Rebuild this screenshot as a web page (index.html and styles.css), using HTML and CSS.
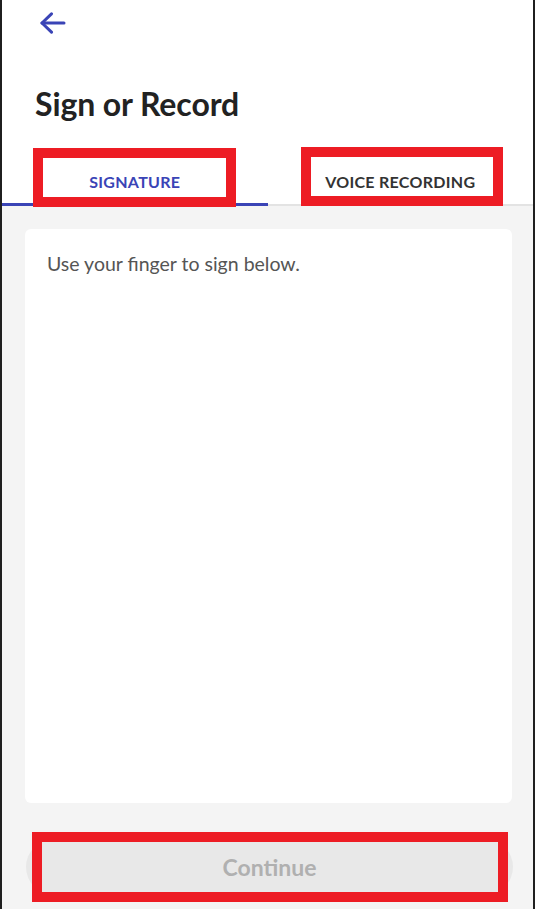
FILE: index.html
```html
<!DOCTYPE html>
<html>
<head>
<meta charset="utf-8">
<link rel="stylesheet" href="styles.css">
</head>
<body>
<div class="screen">
  <header class="header">
    <button class="back" aria-label="Back">
      <svg width="26" height="22" viewBox="0 0 26 22" fill="none" stroke="#3a44b6" stroke-width="3" stroke-linecap="round" stroke-linejoin="round">
        <path d="M2 11H24"/>
        <path d="M11.5 1.8L2 11L11.5 20.2"/>
      </svg>
    </button>
    <h1 class="title">Sign or Record</h1>
  </header>
  <nav class="tabs">
    <div class="tab active">SIGNATURE</div>
    <div class="tab">VOICE RECORDING</div>
  </nav>
  <main class="content">
    <section class="card">
      <p class="hint">Use your finger to sign below.</p>
    </section>
    <button class="continue" disabled>Continue</button>
  </main>
  <div class="mark mark-sig"></div>
  <div class="mark mark-voice"></div>
  <div class="mark mark-continue"></div>
</div>
</body>
</html>
```

FILE: styles.css
```css
* { box-sizing: border-box; }
html, body { margin: 0; padding: 0; }
body {
  font-family: Lato, "Open Sans", "Liberation Sans", sans-serif;
  background: #fff;
}
.screen {
  position: relative;
  width: 535px;
  height: 909px;
  border-left: 2px solid #1f1f1f;
  border-right: 2px solid #1f1f1f;
  display: flex;
  flex-direction: column;
  background: #fff;
  overflow: hidden;
}
.header {
  padding: 12px 0 0 33px;
}
.back {
  display: block;
  border: 0;
  background: none;
  padding: 0;
  margin: 0 0 0 5px;
  height: 22px;
}
.back svg { display: block; }
.title {
  margin: 51px 0 0 0;
  font-size: 32px;
  line-height: 38px;
  font-weight: 700;
  color: #222;
  letter-spacing: -0.1px;
}
.tabs {
  display: flex;
  margin-top: 27px;
}
.tab {
  flex: 1;
  text-align: center;
  font-size: 16px;
  line-height: 18px;
  font-weight: 700;
  letter-spacing: 0.3px;
  color: #333;
  padding: 23px 0 13px;
  border-bottom: 2px solid #e3e3e3;
}
.tab.active {
  color: #3a44b6;
  padding-bottom: 12px;
  border-bottom: 3px solid #3a44b6;
}
.content {
  flex: 1;
  background: #f4f4f4;
  display: flex;
  flex-direction: column;
  padding: 23px 21px 14px 23px;
}
.card {
  flex: 1;
  background: #fff;
  border-radius: 6px;
  padding: 24px 22px;
}
.hint {
  margin: 0;
  font-size: 19.5px;
  line-height: 22px;
  color: #555;
}
.continue {
  margin: 36px -1px 0 1px;
  height: 56px;
  border: 0;
  border-radius: 28px;
  background: #e8e8e8;
  color: #b0b0b0;
  font-family: inherit;
  font-size: 23px;
  font-weight: 700;
}
.mark {
  position: absolute;
  border: 10px solid #ed1c24;
}
.mark-sig { left: 31px; top: 148px; width: 203px; height: 59px; }
.mark-voice { left: 299px; top: 147px; width: 202px; height: 59px; }
.mark-continue { left: 30px; top: 832px; width: 476px; height: 70px; }
```
